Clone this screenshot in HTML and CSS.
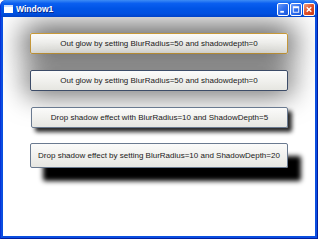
FILE: index.html
```html
<!DOCTYPE html>
<html>
<head>
<meta charset="utf-8">
<link rel="stylesheet" href="styles.css">
</head>
<body>
<div class="window">
  <div class="titlebar">
    <div class="title-left">
      <svg class="app-icon" width="9" height="8" viewBox="0 0 9 8">
        <rect x="0" y="0" width="9" height="8" fill="#ffffff"/>
        <rect x="0" y="0" width="9" height="2" fill="#c8dcff"/>
      </svg>
      <span class="title-text">Window1</span>
    </div>
    <div class="controls">
      <div class="ctl ctl-min"><svg width="11" height="11" viewBox="0 0 11 11"><rect x="2.5" y="7" width="4" height="2" fill="#fff"/></svg></div>
      <div class="ctl ctl-max"><svg width="11" height="11" viewBox="0 0 11 11"><rect x="2.5" y="2.5" width="6" height="6" fill="none" stroke="#fff" stroke-width="1"/><rect x="2.5" y="2.5" width="6" height="1.6" fill="#fff"/></svg></div>
      <div class="ctl ctl-close"><svg width="11" height="11" viewBox="0 0 11 11"><path d="M3 3 L8 8 M8 3 L3 8" stroke="#fff" stroke-width="1.6"/></svg></div>
    </div>
  </div>
  <div class="client">
    <div class="btn btn-glow1">Out glow by setting BlurRadius=50 and shadowdepth=0</div>
    <div class="btn btn-glow2">Out glow by setting BlurRadius=50 and shadowdepth=0</div>
    <div class="btn btn-drop1">Drop shadow effect with BlurRadius=10 and ShadowDepth=5</div>
    <div class="btn btn-drop2">Drop shadow effect by setting BlurRadius=10 and ShadowDepth=20</div>
  </div>
</div>
</body>
</html>
```
FILE: styles.css
```css
html, body {
  margin: 0;
  padding: 0;
  background: #ffffff;
}
body {
  width: 320px;
  height: 240px;
  overflow: hidden;
}
.window {
  width: 318px;
  height: 239px;
  box-sizing: border-box;
  display: flex;
  flex-direction: column;
  background: #0a4ee0;
  border-radius: 6px 6px 0 0;
  border-left: 1px solid #0831d9;
  border-right: 1px solid #001ea0;
  border-bottom: 1px solid #001ea0;
  overflow: hidden;
}
.titlebar {
  height: 17px;
  flex: none;
  display: flex;
  align-items: center;
  justify-content: space-between;
  padding: 0 2px 0 2px;
  background: linear-gradient(to bottom, #3d8cf5 0%, #0a5ff0 20%, #0054e6 50%, #0050e0 80%, #0042c8 100%);
}
.title-left {
  display: flex;
  align-items: center;
  gap: 3px;
  padding-left: 1px;
}
.app-icon {
  display: block;
}
.title-text {
  font-family: "Liberation Sans", Arial, sans-serif;
  font-weight: bold;
  font-size: 8.5px;
  color: #ffffff;
  text-shadow: 1px 1px 0 #0a2a8a;
}
.controls {
  display: flex;
  gap: 1px;
  padding-top: 1px;
}
.ctl {
  width: 12px;
  height: 13px;
  box-sizing: border-box;
  border: 1px solid #ffffff;
  border-radius: 2px;
  display: flex;
  align-items: center;
  justify-content: center;
}
.ctl svg { display: block; }
.ctl-min, .ctl-max {
  background: linear-gradient(135deg, #6f9cf8 0%, #2d6ef0 50%, #1b55d8 100%);
}
.ctl-close {
  background: linear-gradient(135deg, #f0a080 0%, #e0502a 50%, #c83a14 100%);
}
.client {
  flex: 1;
  margin: 0 2px 2px 2px;
  background: #ffffff;
  overflow: hidden;
  display: flex;
  flex-direction: column;
  gap: 16px;
  padding: 16px 0 0 27px;
}
.btn {
  width: 258px;
  height: 21px;
  box-sizing: border-box;
  border: 1px solid #707070;
  border-radius: 2px;
  background: linear-gradient(to bottom, #fbfbfa 0%, #f1f1ee 50%, #e6e6e1 100%);
  font-family: "Liberation Sans", Arial, sans-serif;
  font-size: 8px;
  color: #1a1a1a;
  display: flex;
  align-items: center;
  justify-content: center;
  flex: none;
}
.btn-glow1 {
  border-color: #c89a3a;
  box-shadow: 0 0 30px 6px rgba(0, 0, 0, 0.7);
}
.btn-glow2 {
  border-color: #3c4c68;
  box-shadow: 0 0 28px 4px rgba(0, 0, 0, 0.6);
}
.btn-drop1 {
  margin-left: 1px;
  width: 257px;
  border-color: #6a7a90;
  box-shadow: 4px 4px 4px rgba(0, 0, 0, 0.85);
}
.btn-drop2 {
  margin-top: -1px;
  height: 25px;
  border-color: #6a7a90;
  box-shadow: 13px 13px 5px rgba(0, 0, 0, 1);
}
```
